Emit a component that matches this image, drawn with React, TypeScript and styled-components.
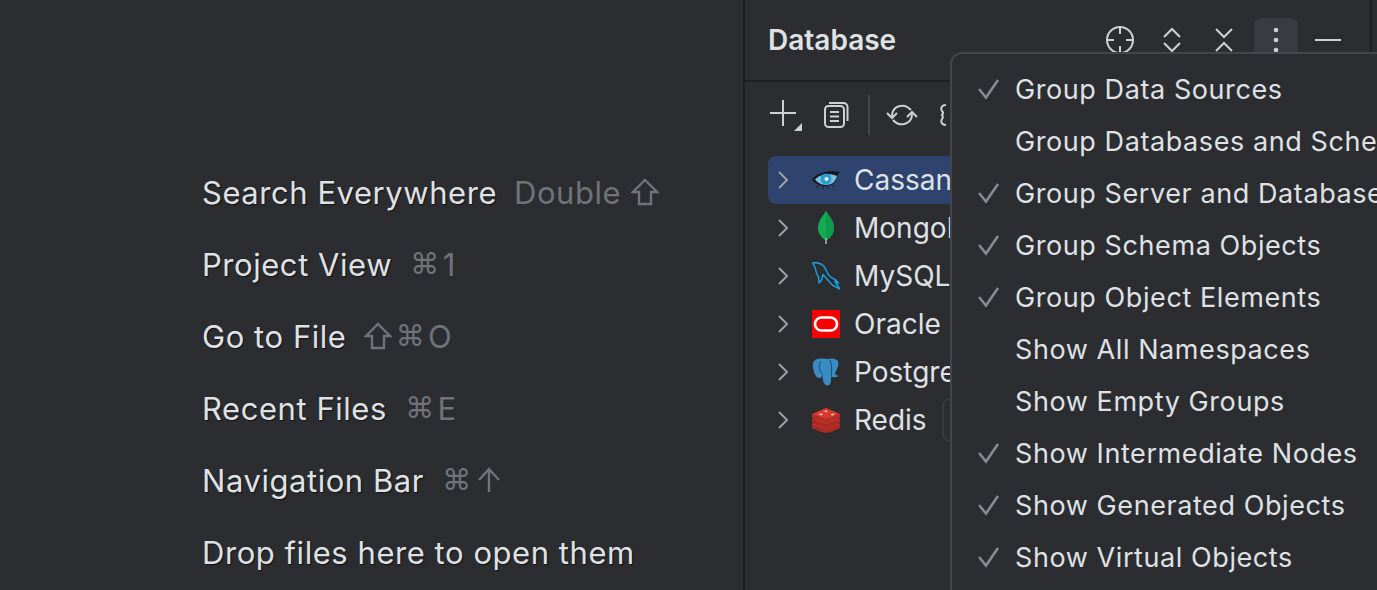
import React from 'react';
import styled, { createGlobalStyle } from 'styled-components';

const GlobalStyle = createGlobalStyle`
  html, body {
    margin: 0;
    padding: 0;
    background: #2b2d30;
  }
  body {
    font-family: Inter, "Noto Sans", sans-serif;
    -webkit-font-smoothing: antialiased;
  }
`;

const Window = styled.div`
  position: relative;
  display: flex;
  width: 1377px;
  height: 590px;
  overflow: hidden;
  background: #2b2d30;
`;

const Editor = styled.div`
  display: flex;
  flex-direction: column;
  box-sizing: border-box;
  width: 743px;
  padding: 156px 0 0 202px;
`;

const HintRow = styled.div`
  display: flex;
  align-items: center;
  gap: 18px;
  height: 72px;
  flex-shrink: 0;
  white-space: nowrap;
`;

const HintLabel = styled.span`
  font-size: 31px;
  letter-spacing: 0.55px;
  color: #dfe1e5;
  text-shadow: 1px 1px 1px #111214;
`;

const HintKeys = styled.span`
  display: flex;
  align-items: center;
  gap: 3px;
  font-size: 31px;
  letter-spacing: 0.55px;
  color: #6f737a;
`;

const HintWord = styled.span`
  margin: 0 7px 0 -1px;
`;

const CommandGlyph = styled.span`
  font-family: "DejaVu Sans", sans-serif;
  font-size: 29px;
`;

const Panel = styled.aside`
  display: flex;
  flex-direction: column;
  box-sizing: border-box;
  width: 629px;
  border-left: 2px solid #1e1f22;
  border-right: 2px solid #1e1f22;
  flex-shrink: 0;
`;

const PanelHeader = styled.header`
  display: flex;
  align-items: center;
  justify-content: space-between;
  box-sizing: border-box;
  height: 82px;
  padding: 0 20px 0 23px;
  border-bottom: 2px solid #1e1f22;
`;

const PanelTitle = styled.h1`
  margin: 0;
  font-size: 28px;
  font-weight: 600;
  color: #dfe1e5;
`;

const HeaderActions = styled.div`
  display: flex;
  gap: 8px;
`;

const HeaderButton = styled.div<{ $active?: boolean }>`
  display: flex;
  align-items: center;
  justify-content: center;
  width: 44px;
  height: 44px;
  border-radius: 8px;
  background: ${(p) => (p.$active ? '#393b40' : 'transparent')};
`;

const Toolbar = styled.div`
  display: flex;
  align-items: center;
  height: 66px;
  padding-left: 24px;
`;

const ToolIcon = styled.svg<{ $gap: number }>`
  flex-shrink: 0;
  margin-right: ${(p) => p.$gap}px;
`;

const ToolSeparator = styled.div`
  width: 2px;
  height: 40px;
  margin-right: 16px;
  background: #43454a;
`;

const Tree = styled.div`
  display: flex;
  flex-direction: column;
  padding: 8px 0 0 23px;
`;

const TreeRow = styled.div<{ $selected?: boolean }>`
  display: flex;
  align-items: center;
  gap: 10px;
  height: 48px;
  padding-left: 6px;
  border-radius: 8px;
  background: ${(p) => (p.$selected ? '#2e436e' : 'transparent')};
`;

const ChevronIcon = styled.svg`
  flex-shrink: 0;
  margin-right: 8px;
`;

const RowLabel = styled.span`
  margin-left: 4px;
  font-size: 28px;
  color: #dfe1e5;
`;

const RowBadge = styled.span`
  width: 40px;
  height: 40px;
  margin-left: 5px;
  border: 2px solid #393b40;
  border-radius: 8px;
`;

const Popup = styled.div`
  position: absolute;
  left: 950px;
  top: 52px;
  box-sizing: border-box;
  width: 560px;
  height: 640px;
  padding-top: 9px;
  border: 2px solid #43454a;
  border-radius: 12px;
  background: #2b2d30;
`;

const MenuItem = styled.div`
  display: flex;
  align-items: center;
  gap: 14px;
  height: 52px;
  padding-left: 25px;
  white-space: nowrap;
`;

const MenuCheck = styled.span`
  display: flex;
  width: 24px;
  height: 24px;
`;

const MenuLabel = styled.span`
  font-size: 27px;
  letter-spacing: 0.58px;
  color: #dfe1e5;
`;

const Stroke = { fill: 'none', stroke: '#ced0d6', strokeWidth: 2 } as const;

function ShiftArrow() {
  return (
    <svg width="28" height="28" viewBox="0 0 28 28">
      <path d="M14 2 L26 14 H20 V26 H8 V14 H2 Z" fill="none" stroke="#6f737a" strokeWidth="2.4" strokeLinejoin="miter" />
    </svg>
  );
}

function UpArrow() {
  return (
    <svg width="28" height="28" viewBox="0 0 28 28">
      <path d="M14 26 V4 M4 14 L14 3 L24 14" fill="none" stroke="#6f737a" strokeWidth="2.4" />
    </svg>
  );
}

function Chevron() {
  return (
    <ChevronIcon width="20" height="20" viewBox="0 0 20 20">
      <path d="M5 2 L13 10 L5 18" fill="none" stroke="#9da0a8" strokeWidth="2" />
    </ChevronIcon>
  );
}

function CheckMark() {
  return (
    <svg width="24" height="24" viewBox="0 0 24 24">
      <path d="M2 12 L9 20.500 L21 3" fill="none" stroke="#868a91" strokeWidth="2.6" />
    </svg>
  );
}

function CassandraIcon() {
  return (
    <svg width="28" height="28" viewBox="0 0 28 28">
      <path d="M0 14 C5 6 18 4 28 6 L25 9 C26 12 24 15 22 17 C16 22 7 21 0 14 Z" fill="#14171c" />
      <path d="M3 13.500 C8 7.500 19 7 25 10 C24 15 20 19 14 19 C9 19 5 16 3 13.500 Z" fill="#7cc0df" />
      <circle cx="14" cy="13" r="5.500" fill="#2a9bd4" />
      <circle cx="14.500" cy="13" r="2" fill="#f2fbff" />
      <path d="M6 19 L5 22 M11 20.500 L11 23 M15 20.500 L16 23 M20 18.500 L22 21" stroke="#14171c" strokeWidth="1" />
    </svg>
  );
}

function MongoIcon() {
  return (
    <svg width="28" height="34" viewBox="0 0 28 34">
      <path d="M14 0 C18 6 22 10 22 17 C22 23 18 27 14.500 29 L13.500 29 C10 27 6 23 6 17 C6 10 10 6 14 0 Z" fill="#13aa52" />
      <path d="M14 0 C18 6 22 10 22 17 C22 23 18 27 14.500 29 L14 29 Z" fill="#0f9a4a" />
      <path d="M14 27 V33" stroke="#b8c4bc" strokeWidth="1.400" />
    </svg>
  );
}

function MysqlIcon() {
  return (
    <svg width="28" height="28" viewBox="0 0 28 28">
      <path
        d="M0.500 1 C5 0 9 1 12 4.500 C14.500 8 15 12 18.500 15 C21 17 25 17.500 26.500 21 L23 19.500 L28 27 L21 23.500 C17 20 14 15.500 11 12.500 L9.500 18 L7 21 L6.500 15 L4.500 11 C4 7 3 4 0.500 1 Z"
        fill="none"
        stroke="#1a9fe0"
        strokeWidth="1.500"
        strokeLinejoin="round"
      />
    </svg>
  );
}

function OracleIcon() {
  return (
    <svg width="28" height="28" viewBox="0 0 28 28">
      <rect width="28" height="28" fill="#f80000" />
      <rect x="3" y="7.500" width="22" height="13" rx="6.500" fill="none" stroke="#ffffff" strokeWidth="2.600" />
    </svg>
  );
}

function PostgresIcon() {
  return (
    <svg width="28" height="28" viewBox="0 0 28 28">
      <path
        d="M8 0.500 C2.500 0.500 0 4 1 9.500 C2 15 4 20 7.500 20 C9.500 20 10 18 10.500 16 C10.500 21 11 27 15.500 27.500 C19.500 27.500 19 22 19 18.500 C22 20 26 19 26.500 17.500 C24 17.500 22.500 16.500 23.500 14 C26 10 27.500 5 25.500 2.500 C23 0 18.500 0 15 1 C13 0.500 11 0.500 8 0.500 Z"
        fill="#3a8cc4"
      />
      <path d="M9 3 C6 7 7 13 10.500 16 M18 2 C20 6 20 12 19 18" fill="none" stroke="#1d4f73" strokeWidth="1" />
    </svg>
  );
}

function RedisIcon() {
  return (
    <svg width="28" height="28" viewBox="0 0 28 28">
      <path d="M0 18 V22 C6 25 10 26.500 14 27 C18 26.500 22 25 28 22 V18 Z" fill="#a82a22" />
      <path d="M0 18 L14 23 L28 18 L14 13 Z" fill="#c8352b" />
      <path d="M0 13 V17 L14 22 L28 17 V13 Z" fill="#a82a22" />
      <path d="M0 13 L14 18 L28 13 L14 8 Z" fill="#cf372d" />
      <path d="M0 8 V12 L14 17 L28 12 V8 Z" fill="#b22d24" />
      <path d="M0 8 L14 13 L28 8 L14 2 Z" fill="#d8382e" />
      <path d="M11 5 L15 4.500 L15.500 6.500 Z M19 8 L23 7.500 L20 10 Z M6 8 L11 7.500 L9.500 9.500 Z" fill="#f6d4d0" />
    </svg>
  );
}

const HINTS: { label: string; keys: React.ReactNode }[] = [
  { label: 'Search Everywhere', keys: <><HintWord>Double</HintWord><ShiftArrow /></> },
  { label: 'Project View', keys: <><CommandGlyph>⌘</CommandGlyph>1</> },
  { label: 'Go to File', keys: <><ShiftArrow /><CommandGlyph>⌘</CommandGlyph>O</> },
  { label: 'Recent Files', keys: <><CommandGlyph>⌘</CommandGlyph>E</> },
  { label: 'Navigation Bar', keys: <><CommandGlyph>⌘</CommandGlyph><UpArrow /></> },
  { label: 'Drop files here to open them', keys: null },
];

const SOURCES = [
  { name: 'Cassandra', Icon: CassandraIcon, selected: true },
  { name: 'MongoDB', Icon: MongoIcon },
  { name: 'MySQL', Icon: MysqlIcon },
  { name: 'Oracle', Icon: OracleIcon },
  { name: 'PostgreSQL', Icon: PostgresIcon },
  { name: 'Redis', Icon: RedisIcon, badge: true },
];

const MENU = [
  { label: 'Group Data Sources', on: true },
  { label: 'Group Databases and Schemas', on: false },
  { label: 'Group Server and Database Objects', on: true },
  { label: 'Group Schema Objects', on: true },
  { label: 'Group Object Elements', on: true },
  { label: 'Show All Namespaces', on: false },
  { label: 'Show Empty Groups', on: false },
  { label: 'Show Intermediate Nodes', on: true },
  { label: 'Show Generated Objects', on: true },
  { label: 'Show Virtual Objects', on: true },
];

function App() {
  return (
    <Window>
      <GlobalStyle />
      <Editor>
        {HINTS.map((hint) => (
          <HintRow key={hint.label}>
            <HintLabel>{hint.label}</HintLabel>
            {hint.keys && <HintKeys>{hint.keys}</HintKeys>}
          </HintRow>
        ))}
      </Editor>
      <Panel>
        <PanelHeader>
          <PanelTitle>Database</PanelTitle>
          <HeaderActions>
            <HeaderButton>
              <svg width="30" height="30" viewBox="0 0 30 30">
                <circle cx="15" cy="15" r="13" {...Stroke} />
                <path d="M15 2 V9 M15 21 V28 M2 15 H9 M21 15 H28" {...Stroke} />
              </svg>
            </HeaderButton>
            <HeaderButton>
              <svg width="28" height="28" viewBox="0 0 28 28">
                <path d="M6 11 L14 3 L22 11 M6 17 L14 25 L22 17" {...Stroke} />
              </svg>
            </HeaderButton>
            <HeaderButton>
              <svg width="28" height="28" viewBox="0 0 28 28">
                <path d="M6 3 L14 11 L22 3 M6 25 L14 17 L22 25" {...Stroke} />
              </svg>
            </HeaderButton>
            <HeaderButton $active>
              <svg width="28" height="28" viewBox="0 0 28 28">
                <circle cx="14" cy="4" r="2.300" fill="#ced0d6" />
                <circle cx="14" cy="14" r="2.300" fill="#ced0d6" />
                <circle cx="14" cy="24" r="2.300" fill="#ced0d6" />
              </svg>
            </HeaderButton>
            <HeaderButton>
              <svg width="28" height="28" viewBox="0 0 28 28">
                <path d="M1 14 H27" {...Stroke} />
              </svg>
            </HeaderButton>
          </HeaderActions>
        </PanelHeader>
        <Toolbar>
          <ToolIcon $gap={20} width="34" height="36" viewBox="0 0 34 36">
            <path d="M14 3 V29 M1 16 H27" {...Stroke} />
            <path d="M33 26 V34 H25 Z" fill="#ced0d6" />
          </ToolIcon>
          <ToolIcon $gap={19} width="26" height="28" viewBox="0 0 26 28">
            <rect x="2" y="5" width="19" height="21" rx="3.500" {...Stroke} />
            <path d="M6 2 H20 A4 4 0 0 1 24.500 6 V20" {...Stroke} />
            <path d="M7 11 H16 M7 15.500 H16 M7 20 H16" {...Stroke} />
          </ToolIcon>
          <ToolSeparator />
          <ToolIcon $gap={21} width="32" height="28" viewBox="0 0 32 28">
            <path d="M6 15 C6 5 18 1 25 9 M26 13 C26 23 14 27 7 19" {...Stroke} />
            <path d="M1 12 L6 17 L11 12 M21 16 L26 11 L31 16" {...Stroke} />
          </ToolIcon>
          <ToolIcon $gap={0} width="26" height="28" viewBox="0 0 26 28">
            <path d="M7 4 C3 4 1 7 3 10 C5 12 3 14 3 14 C3 14 5 16 3 18 C1 21 3 24 7 24" {...Stroke} />
          </ToolIcon>
        </Toolbar>
        <Tree>
          {SOURCES.map(({ name, Icon, selected, badge }) => (
            <TreeRow key={name} $selected={selected}>
              <Chevron />
              <Icon />
              <RowLabel>{name}</RowLabel>
              {badge && <RowBadge />}
            </TreeRow>
          ))}
        </Tree>
      </Panel>
      <Popup>
        {MENU.map((item) => (
          <MenuItem key={item.label}>
            <MenuCheck>{item.on && <CheckMark />}</MenuCheck>
            <MenuLabel>{item.label}</MenuLabel>
          </MenuItem>
        ))}
      </Popup>
    </Window>
  );
}

export default App;
